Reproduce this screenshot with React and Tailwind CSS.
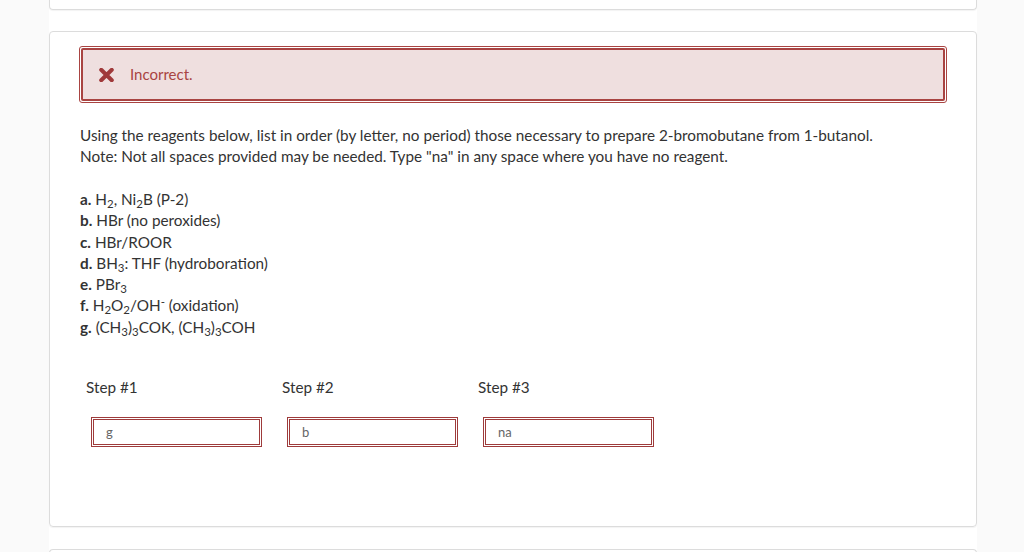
const reagents = [
  ['a.', <>H<sub>2</sub>, Ni<sub>2</sub>B (P-2)</>],
  ['b.', <>HBr (no peroxides)</>],
  ['c.', <>HBr/ROOR</>],
  ['d.', <>BH<sub>3</sub>: THF (hydroboration)</>],
  ['e.', <>PBr<sub>3</sub></>],
  ['f.', <>H<sub>2</sub>O<sub>2</sub>/OH<sup>-</sup> (oxidation)</>],
  ['g.', <>(CH<sub>3</sub>)<sub>3</sub>COK, (CH<sub>3</sub>)<sub>3</sub>COH</>],
]

const steps = [
  { label: 'Step #1', value: 'g' },
  { label: 'Step #2', value: 'b' },
  { label: 'Step #3', value: 'na' },
]

export default function App() {
  return (
    <div className="h-[552px] overflow-hidden bg-[#fafafa]" style={{ fontFamily: 'Lato, "Noto Sans", sans-serif' }}>
      <div className="ml-[49px] flex h-full w-[928px] flex-col bg-white">
        {/* previous card bottom */}
        <div className="-mt-[20px] h-[30px] shrink-0 rounded-b-[4px] border border-t-0 border-[#dcdcdc] shadow-[0_1px_1px_rgba(0,0,0,0.05)]" />

        <div className="mt-[21px] h-[496px] shrink-0 rounded-[4px] border border-[#dcdcdc] px-[29px] pt-[14px] shadow-[0_1px_1px_rgba(0,0,0,0.05)]">
          <div className="rounded-[3px] border border-[#a94442] p-px">
            <div className="flex h-[53px] items-center gap-[16px] rounded-[2px] border-2 border-[#a94442] bg-[#efdfdf] pl-[16px]">
              <svg width="15" height="14" viewBox="0 0 15 14" className="text-[#a0393a]">
                <path d="M2.2 1.8 L12.8 12.2 M12.8 1.8 L2.2 12.2" stroke="currentColor" strokeWidth="4" strokeLinecap="round" />
              </svg>
              <span className="text-[15px] text-[#a94442]">Incorrect.</span>
            </div>
          </div>

          <div className="mt-[22px] text-[15.3px] leading-[21px] text-[#333]">
            <p className="pl-px">
              Using the reagents below, list in order (by letter, no period) those necessary to prepare 2-bromobutane from 1-butanol.
              <br />
              Note: Not all spaces provided may be needed. Type "na" in any space where you have no reagent.
            </p>

            <div className="mt-[22px] flex flex-col pl-px leading-[21.3px]">
              {reagents.map(([letter, text]) => (
                <div key={letter}>
                  <span className="font-bold">{letter}</span> {text}
                </div>
              ))}
            </div>

            <div className="mt-[39px] flex pl-[7px]">
              {steps.map((s) => (
                <div key={s.label} className="w-[196px]">
                  <div className="leading-[21px]">{s.label}</div>
                  <div className="ml-[5px] mt-[19px] flex h-[30px] w-[171px] items-center border-[3px] border-double border-[#9e3b3b] pl-[12px] text-[13px] text-[#666]">
                    {s.value}
                  </div>
                </div>
              ))}
            </div>
          </div>
        </div>

        <div className="mt-[22px] h-[40px] shrink-0 rounded-t-[4px] border border-b-0 border-[#dcdcdc]" />
      </div>
    </div>
  )
}
